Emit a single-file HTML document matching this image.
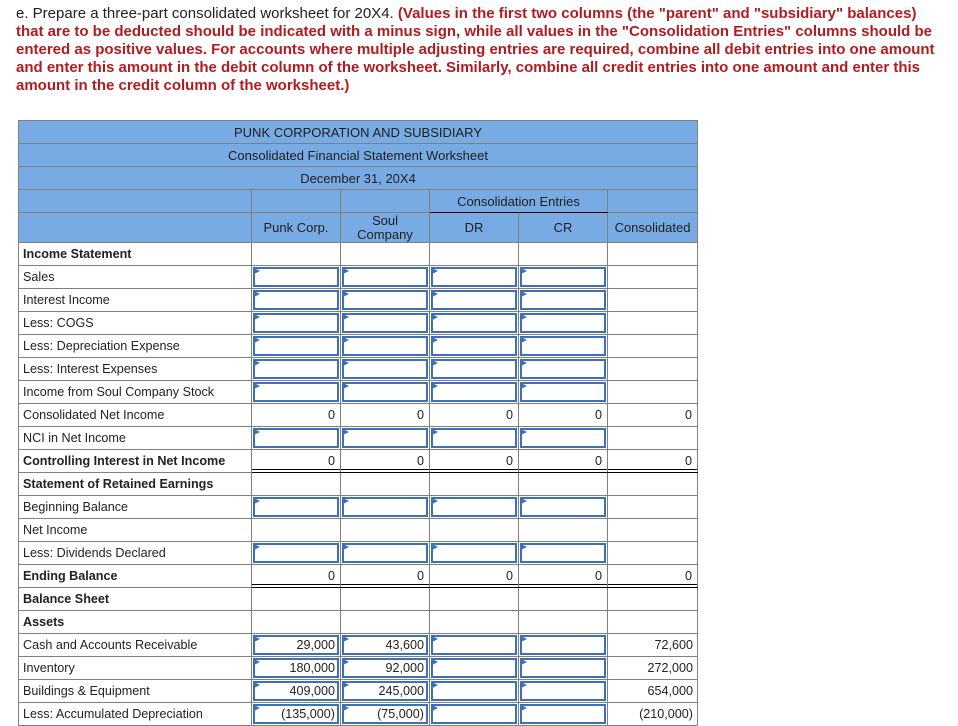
<!DOCTYPE html>
<html><head><meta charset="utf-8"><style>
body{margin:0;background:#fff;font-family:"Liberation Sans",sans-serif;color:#222;width:958px;height:726px;overflow:hidden;position:relative}
.q{position:absolute;left:16px;top:5px;font-size:15px;line-height:18px;white-space:nowrap}
.q b{color:#b01c20}
table{position:absolute;left:18px;top:120px;border-collapse:collapse;table-layout:fixed;width:680px;font-size:12.6px}
td{border:1px solid #808080;padding:0;height:22px;position:relative;overflow:visible}
tr.h td{background:#78aae3;text-align:center;color:#1e1e1e;font-size:13px}
td.l{padding-left:4px;white-space:nowrap}
td.b{font-weight:bold}
td.n{text-align:right;padding-right:5px;border-top:1px solid #000}
td.d{border-bottom:1px solid #000}
td.d:after{content:"";position:absolute;left:0;right:0;bottom:2px;height:1px;background:#000}
.i{position:absolute;left:1px;top:1px;right:1px;bottom:1px;border:2px solid #3d70b6;box-sizing:border-box;text-align:right;padding-right:2px;line-height:17px}
.i:before{content:"";position:absolute;left:-1px;top:-1px;border-left:6px solid #3d70b6;border-top:3px solid transparent;border-bottom:3px solid transparent}
</style></head><body>
<div class="q">
<div>e. Prepare a three-part consolidated worksheet for 20X4. <b>(Values in the first two columns (the "parent" and "subsidiary" balances)</b></div>
<div><b>that are to be deducted should be indicated with a minus sign, while all values in the "Consolidation Entries" columns should be</b></div>
<div><b>entered as positive values. For accounts where multiple adjusting entries are required, combine all debit entries into one amount</b></div>
<div><b>and enter this amount in the debit column of the worksheet. Similarly, combine all credit entries into one amount and enter this</b></div>
<div><b>amount in the credit column of the worksheet.)</b></div>
</div>
<table>
<colgroup><col style="width:233px"><col style="width:89px"><col style="width:89px"><col style="width:89px"><col style="width:89px"><col style="width:90px"></colgroup>
<tr class="h"><td colspan="6">PUNK CORPORATION AND SUBSIDIARY</td></tr>
<tr class="h"><td colspan="6">Consolidated Financial Statement Worksheet</td></tr>
<tr class="h"><td colspan="6">December 31, 20X4</td></tr>
<tr class="h"><td></td><td></td><td></td><td colspan="2" style="border-bottom:1px solid #000">Consolidation Entries</td><td></td></tr>
<tr class="h" style="height:30px"><td></td><td>Punk Corp.</td><td style="line-height:14px">Soul<br>Company</td><td>DR</td><td>CR</td><td>Consolidated</td></tr>
<tr><td class="l b">Income Statement</td><td></td><td></td><td></td><td></td><td></td></tr>
<tr><td class="l">Sales</td><td><div class="i"></div></td><td><div class="i"></div></td><td><div class="i"></div></td><td><div class="i"></div></td><td></td></tr>
<tr><td class="l">Interest Income</td><td><div class="i"></div></td><td><div class="i"></div></td><td><div class="i"></div></td><td><div class="i"></div></td><td></td></tr>
<tr><td class="l">Less: COGS</td><td><div class="i"></div></td><td><div class="i"></div></td><td><div class="i"></div></td><td><div class="i"></div></td><td></td></tr>
<tr><td class="l">Less: Depreciation Expense</td><td><div class="i"></div></td><td><div class="i"></div></td><td><div class="i"></div></td><td><div class="i"></div></td><td></td></tr>
<tr><td class="l">Less: Interest Expenses</td><td><div class="i"></div></td><td><div class="i"></div></td><td><div class="i"></div></td><td><div class="i"></div></td><td></td></tr>
<tr><td class="l">Income from Soul Company Stock</td><td><div class="i"></div></td><td><div class="i"></div></td><td><div class="i"></div></td><td><div class="i"></div></td><td></td></tr>
<tr><td class="l">Consolidated Net Income</td><td class="n">0</td><td class="n">0</td><td class="n">0</td><td class="n">0</td><td class="n">0</td></tr>
<tr><td class="l">NCI in Net Income</td><td><div class="i"></div></td><td><div class="i"></div></td><td><div class="i"></div></td><td><div class="i"></div></td><td></td></tr>
<tr><td class="l b">Controlling Interest in Net Income</td><td class="n d">0</td><td class="n d">0</td><td class="n d">0</td><td class="n d">0</td><td class="n d">0</td></tr>
<tr><td class="l b">Statement of Retained Earnings</td><td></td><td></td><td></td><td></td><td></td></tr>
<tr><td class="l">Beginning Balance</td><td><div class="i"></div></td><td><div class="i"></div></td><td><div class="i"></div></td><td><div class="i"></div></td><td></td></tr>
<tr><td class="l">Net Income</td><td></td><td></td><td></td><td></td><td></td></tr>
<tr><td class="l">Less: Dividends Declared</td><td><div class="i"></div></td><td><div class="i"></div></td><td><div class="i"></div></td><td><div class="i"></div></td><td></td></tr>
<tr><td class="l b">Ending Balance</td><td class="n d">0</td><td class="n d">0</td><td class="n d">0</td><td class="n d">0</td><td class="n d">0</td></tr>
<tr><td class="l b">Balance Sheet</td><td></td><td></td><td></td><td></td><td></td></tr>
<tr><td class="l b">Assets</td><td></td><td></td><td></td><td></td><td></td></tr>
<tr><td class="l">Cash and Accounts Receivable</td><td><div class="i">29,000</div></td><td><div class="i">43,600</div></td><td><div class="i"></div></td><td><div class="i"></div></td><td style="text-align:right;padding-right:4px">72,600</td></tr>
<tr><td class="l">Inventory</td><td><div class="i">180,000</div></td><td><div class="i">92,000</div></td><td><div class="i"></div></td><td><div class="i"></div></td><td style="text-align:right;padding-right:4px">272,000</td></tr>
<tr><td class="l">Buildings &amp; Equipment</td><td><div class="i">409,000</div></td><td><div class="i">245,000</div></td><td><div class="i"></div></td><td><div class="i"></div></td><td style="text-align:right;padding-right:4px">654,000</td></tr>
<tr><td class="l">Less: Accumulated Depreciation</td><td><div class="i">(135,000)</div></td><td><div class="i">(75,000)</div></td><td><div class="i"></div></td><td><div class="i"></div></td><td style="text-align:right;padding-right:4px">(210,000)</td></tr>
</table>
</body></html>
